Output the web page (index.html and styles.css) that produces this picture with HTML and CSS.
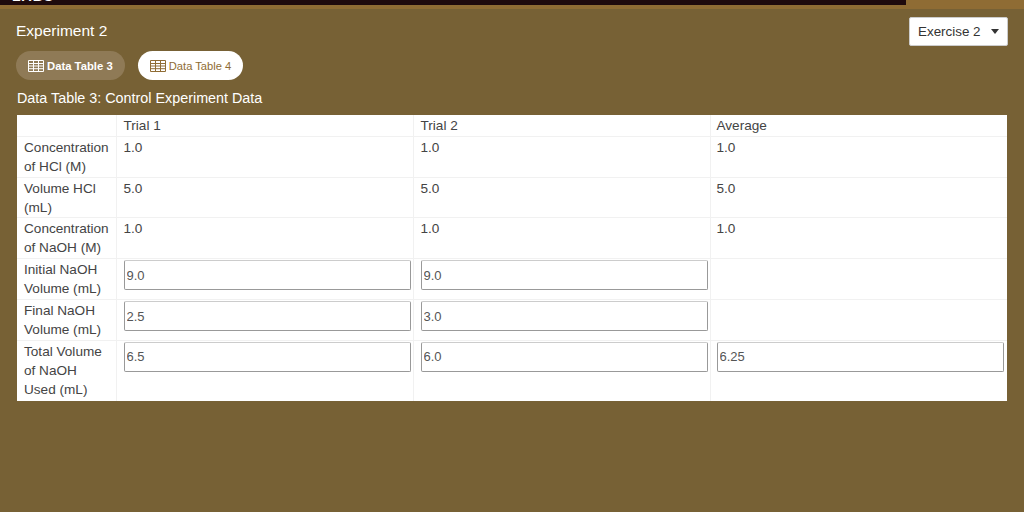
FILE: index.html
```html
<!DOCTYPE html>
<html lang="en">
<head>
    <meta charset="UTF-8">
    <title>Experiment 2</title>
    <link rel="stylesheet" href="styles.css">
</head>
<body>
    <div class="topbar">
        <div class="brand"><span>LABS</span></div>
    </div>
    <div class="content">
        <div class="head">
            <h1>Experiment 2</h1>
            <div class="select"><span>Exercise 2</span><i class="caret"></i></div>
        </div>
        <div class="tabs">
            <div class="tab active">
                <svg class="grid-icon" viewBox="0 0 16 12"><path d="M.5.5h15v11H.5zM.5 3.5h15M.5 6h15M.5 8.7h15M5.5 .5v11M10.5 .5v11"/></svg>
                Data Table 3
            </div>
            <div class="tab">
                <svg class="grid-icon" viewBox="0 0 16 12"><path d="M.5.5h15v11H.5zM.5 3.5h15M.5 6h15M.5 8.7h15M5.5 .5v11M10.5 .5v11"/></svg>
                Data Table 4
            </div>
        </div>
        <h2>Data Table 3: Control Experiment Data</h2>
        <table class="data">
            <colgroup>
                <col class="c-label"><col class="c-val"><col class="c-val"><col class="c-val">
            </colgroup>
            <tr class="r-head"><td></td><td>Trial 1</td><td>Trial 2</td><td>Average</td></tr>
            <tr class="r-2"><td>Concentration of HCl (M)</td><td>1.0</td><td>1.0</td><td>1.0</td></tr>
            <tr class="r-2"><td>Volume HCl (mL)</td><td>5.0</td><td>5.0</td><td>5.0</td></tr>
            <tr class="r-2"><td>Concentration of NaOH (M)</td><td>1.0</td><td>1.0</td><td>1.0</td></tr>
            <tr class="r-2"><td>Initial NaOH Volume (mL)</td><td><input value="9.0"></td><td><input value="9.0"></td><td></td></tr>
            <tr class="r-2"><td>Final NaOH Volume (mL)</td><td><input value="2.5"></td><td><input value="3.0"></td><td></td></tr>
            <tr class="r-3"><td>Total Volume of NaOH Used (mL)</td><td><input value="6.5"></td><td><input value="6.0"></td><td><input value="6.25"></td></tr>
        </table>
    </div>
</body>
</html>
```

FILE: styles.css
```css
html, body {
    height: 100%;
}
body {
    margin: 0;
    background-color: #776135;
    font-family: "Liberation Sans", Arial, sans-serif;
    color: #444;
    overflow: hidden;
}
.topbar {
    height: 9px;
    background-color: #8f6c34;
}
.brand {
    width: 906px;
    height: 5px;
    background-color: #1f0a0d;
    overflow: hidden;
}
.brand span {
    display: block;
    margin: -11px 0 0 12px;
    font-size: 14px;
    line-height: 14px;
    font-weight: bold;
    letter-spacing: 1px;
    color: #fff;
}
.content {
    padding: 8px 17px 0 16px;
}
.head {
    display: flex;
    justify-content: space-between;
    align-items: flex-start;
}
h1 {
    margin: 4px 0 0;
    font-size: 15.5px;
    line-height: 20px;
    font-weight: normal;
    color: #fff;
}
.select {
    display: flex;
    align-items: center;
    box-sizing: border-box;
    width: 99px;
    height: 29px;
    margin-right: -1px;
    padding: 0 8px;
    justify-content: space-between;
    background-color: #fff;
    border: 1px solid #ccc;
    border-radius: 2px;
    font-size: 13.4px;
    color: #333;
}
.caret {
    width: 0;
    height: 0;
    border-left: 4.5px solid transparent;
    border-right: 4.5px solid transparent;
    border-top: 5px solid #333;
}
.tabs {
    display: flex;
    gap: 13px;
    margin-top: 5px;
}
.tab {
    display: flex;
    align-items: center;
    gap: 3px;
    height: 29px;
    padding: 0 12px;
    border-radius: 15px;
    background-color: #fff;
    color: #8f6c34;
    font-size: 11.2px;
}
.tab.active {
    background-color: #8f7a56;
    color: #fff;
    font-size: 11.3px;
    font-weight: bold;
}
.grid-icon {
    width: 16px;
    height: 12px;
    fill: none;
    stroke: currentColor;
    stroke-width: 1;
}
h2 {
    margin: 9px 0 0 1px;
    font-size: 14.35px;
    line-height: 18px;
    font-weight: normal;
    color: #fff;
}
.data {
    width: 990px;
    margin: 8px 0 0 1px;
    border-collapse: collapse;
    table-layout: fixed;
    background-color: #fff;
    font-size: 13.6px;
    line-height: 19px;
}
.c-label {
    width: 99px;
}
.data td {
    padding: 1px 2px 0 7px;
    vertical-align: top;
    border-top: 1px solid #f1f1f1;
    border-left: 1px solid #f1f1f1;
}
.data td:first-child {
    padding-right: 7px;
    border-left: 0;
}
.data td:last-child {
    padding: 1px 3px 0 6px;
}
.data tr:first-child td {
    border-top: 0;
}
.r-head td {
    height: 21.4px;
    box-sizing: border-box;
}
.r-2 td {
    height: 40.8px;
    box-sizing: border-box;
}
.r-3 td {
    height: 60.6px;
    box-sizing: border-box;
}
.data input {
    display: block;
    box-sizing: border-box;
    width: 100%;
    height: 30px;
    margin: 0;
    padding: 0 2px;
    border: 1px solid #999;
    border-top-color: #ccc;
    border-radius: 2px;
    font-family: inherit;
    font-size: 13px;
    color: #555;
}
```
